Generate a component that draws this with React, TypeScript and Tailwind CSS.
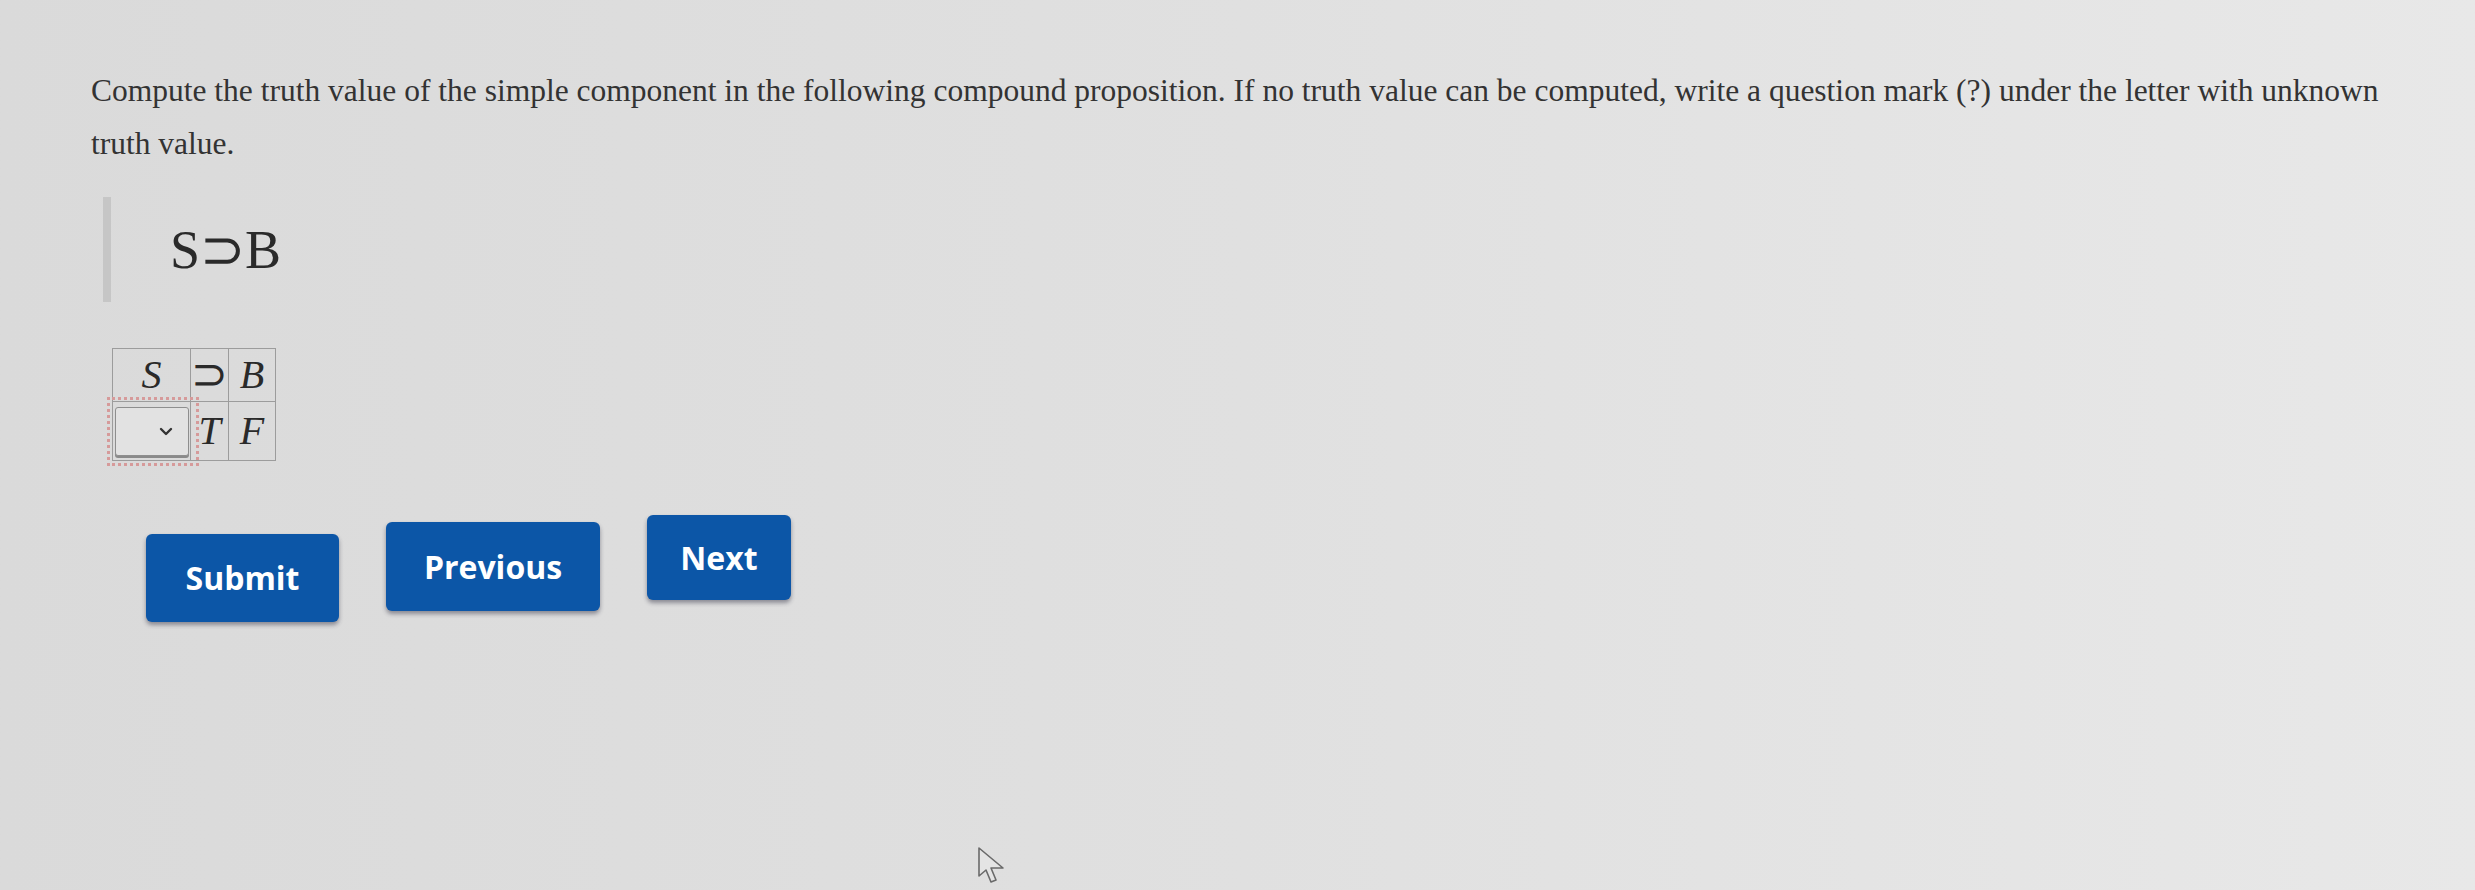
import React from 'react';

const serif = { fontFamily: '"Liberation Serif", "Times New Roman", serif' };

function Chevron() {
  return (
    <svg width="16" height="10" viewBox="0 0 16 10" className="text-[#333]">
      <path d="M3 3 L8 8 L13 3" fill="none" stroke="currentColor" strokeWidth="2.4" strokeLinecap="round" strokeLinejoin="round" />
    </svg>
  );
}

function Cursor() {
  return (
    <svg width="30" height="40" viewBox="0 0 30 40" className="absolute left-[977px] top-[846px]">
      <path
        d="M2 2 L2 30 L9 24 L14 36 L19 34 L14 22 L26 22 Z"
        fill="#e4e4e4"
        stroke="#6a6a6a"
        strokeWidth="1.6"
        strokeLinejoin="round"
      />
    </svg>
  );
}

function TruthTable() {
  return (
    <table className="border-collapse text-[40px] italic text-[#2a2a2a]" style={serif}>
      <tbody>
        <tr className="h-[53px]">
          <td className="w-[78px] border border-[#9c9c9c] text-center leading-none">S</td>
          <td className="w-[38px] border border-[#9c9c9c] text-center text-[44px] not-italic leading-none">⊃</td>
          <td className="w-[47px] border border-[#9c9c9c] text-center leading-none">B</td>
        </tr>
        <tr className="h-[58px]">
          <td className="border border-[#9c9c9c] p-0">
            <div className="relative flex h-[58px] items-center justify-center">
              <div className="pointer-events-none absolute -left-[6px] -right-[9px] -top-[5px] -bottom-[6px] border-[3px] border-dotted border-[#d69a9a]" />
              <div className="flex h-[49px] w-[74px] items-center justify-end rounded-[3px] border border-[#8e8e8e] bg-[#e2e2e2] pr-[14px] shadow-[0_2px_0_#8a8a8a]">
                <Chevron />
              </div>
            </div>
          </td>
          <td className="border border-[#9c9c9c] text-center leading-none">T</td>
          <td className="border border-[#9c9c9c] text-center leading-none">F</td>
        </tr>
      </tbody>
    </table>
  );
}

function Btn({ label, className }: { label: string; className: string }) {
  return (
    <button
      className={`flex items-center justify-center rounded-[6px] bg-[#0c56a7] text-[32px] font-bold text-white shadow-[0_3px_4px_rgba(40,40,60,0.45)] ${className}`}
      style={{ fontFamily: '"Open Sans", "Noto Sans", sans-serif' }}
    >
      {label}
    </button>
  );
}

export default function App() {
  return (
    <div className="relative h-[890px] w-[2475px] overflow-hidden bg-gradient-to-r from-[#dadada] via-[#e0e0e0] to-[#e8e8e8]">
      <div className="pl-[91px] pr-[20px] pt-[64px]">
        <p className="max-w-[2330px] text-[31.5px] leading-[53px] text-[#333]" style={serif}>
          Compute the truth value of the simple component in the following compound proposition. If no truth value can be computed, write a question mark (?) under the letter with unknown truth value.
        </p>

        <div className="ml-[12px] mt-[27px] flex h-[105px] items-center border-l-[8px] border-[#c6c6c6] pl-[59px]">
          <span className="text-[54px] leading-none text-[#2a2a2a]" style={serif}>
            S⊃B
          </span>
        </div>

        <div className="ml-[21px] mt-[46px]">
          <TruthTable />
        </div>

        <div className="ml-[55px] mt-[54px] flex items-start gap-[47px]">
          <Btn label="Submit" className="mt-[19px] h-[88px] w-[193px]" />
          <Btn label="Previous" className="mt-[7px] h-[89px] w-[214px]" />
          <Btn label="Next" className="h-[85px] w-[144px]" />
        </div>
      </div>
      <Cursor />
    </div>
  );
}
